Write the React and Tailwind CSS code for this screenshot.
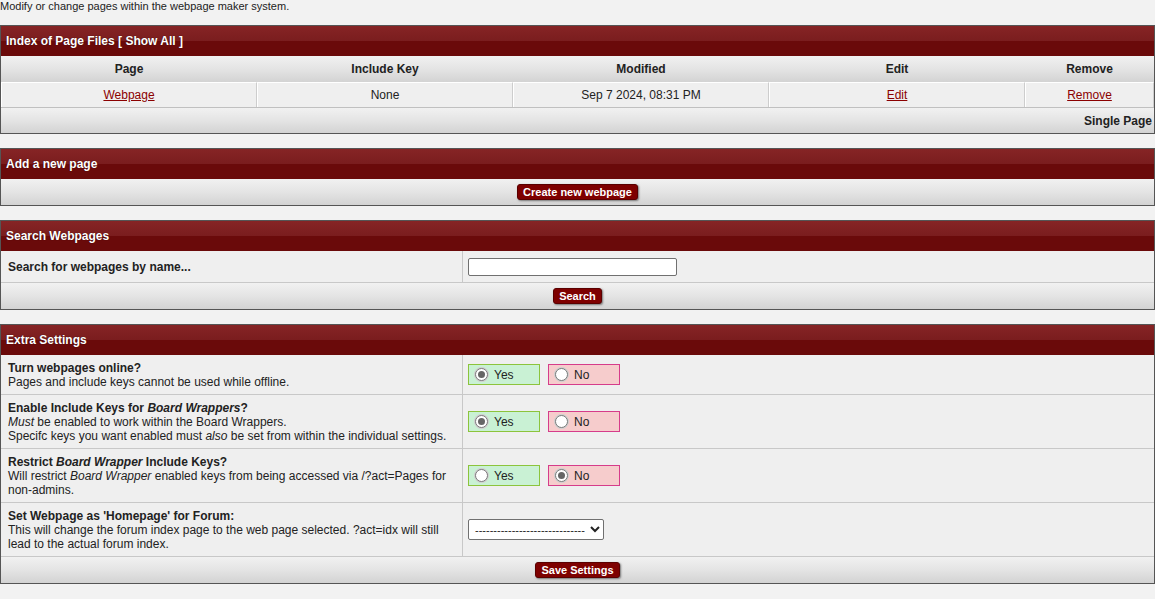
import React from 'react';

const barBg = 'bg-[linear-gradient(to_bottom,#862425_0%,#7a1d1e_50%,#6a0a0a_50%,#6a0a0a_100%)]';
const greyBg = 'bg-[linear-gradient(to_bottom,#f1f1f1_0%,#e4e4e4_50%,#d3d3d3_100%)]';

function Panel({ title, children, className = '' }) {
    return (
        <div className={`border border-[#555] bg-[#efefef] ${className}`}>
            <div className={`h-[30px] flex items-center px-[5px] ${barBg} text-white font-bold text-[12px] [text-shadow:0_0_1px_#300]`}>
                {title}
            </div>
            {children}
        </div>
    );
}

function Button({ children }) {
    return (
        <button className="h-[16px] px-[5px] rounded-[3px] bg-[#7e0000] border border-[#5a0000] text-white font-bold text-[11px] leading-[14px] shadow-[1px_1px_2px_#777]">
            {children}
        </button>
    );
}

function Radio({ checked }) {
    return (
        <span className="w-[13px] h-[13px] rounded-full border border-[#7a7a7a] bg-white flex items-center justify-center shadow-[0_0_0_1px_#cfcfcf]">
            {checked && <span className="w-[7px] h-[7px] rounded-full bg-[#666]"></span>}
        </span>
    );
}

function YesNo({ yes }) {
    return (
        <div className="flex gap-[8px]">
            <label className="w-[72px] h-[21px] flex items-center gap-[6px] pl-[6px] bg-[#c9f1d4] border border-[#8cc43c]">
                <Radio checked={yes} />
                <span>Yes</span>
            </label>
            <label className="w-[72px] h-[21px] flex items-center gap-[6px] pl-[6px] bg-[#f6cccc] border border-[#d63c8a]">
                <Radio checked={!yes} />
                <span>No</span>
            </label>
        </div>
    );
}

function SettingRow({ title, children, control }) {
    return (
        <div className="grid grid-cols-[462px_1fr] border-b border-[#c8c8c8]">
            <div className="px-[7px] pt-[6px] pb-[5px] leading-[14px] border-r border-[#c8c8c8]">
                <div className="font-bold">{title}</div>
                {children}
            </div>
            <div className="flex items-center px-[5px]">{control}</div>
        </div>
    );
}

export default function App() {
    const cols = ['Page', 'Include Key', 'Modified', 'Edit', 'Remove'];
    return (
        <div className="min-h-screen bg-[#f2f2f2] text-[#222] text-[12px] font-['Liberation_Sans',Arial,sans-serif]">
            <p className="text-[11px] leading-[13px] h-[25px]">Modify or change pages within the webpage maker system.</p>

            {/* Index of page files */}
            <Panel title={<span>Index of Page Files [ <a className="text-white">Show All</a> ]</span>}>
                <div className={`grid grid-cols-[256px_256px_256px_256px_1fr] h-[26px] items-center font-bold ${greyBg}`}>
                    {cols.map(c => (
                        <div key={c} className="text-center">{c}</div>
                    ))}
                </div>
                <div className="grid grid-cols-[256px_256px_256px_256px_1fr] h-[26px] border-b border-[#c0c0c0]">
                    <div className="flex items-center justify-center border-t border-l border-white border-r border-r-[#cdcdcd]">
                        <a className="text-[#8b0000] underline">Webpage</a>
                    </div>
                    <div className="flex items-center justify-center border-t border-l border-white border-r border-r-[#cdcdcd]">None</div>
                    <div className="flex items-center justify-center border-t border-l border-white border-r border-r-[#cdcdcd]">Sep 7 2024, 08:31 PM</div>
                    <div className="flex items-center justify-center border-t border-l border-white border-r border-r-[#cdcdcd]">
                        <a className="text-[#8b0000] underline">Edit</a>
                    </div>
                    <div className="flex items-center justify-center border-t border-l border-white border-r border-r-[#cdcdcd]">
                        <a className="text-[#8b0000] underline">Remove</a>
                    </div>
                </div>
                <div className={`h-[25px] flex items-center justify-end pr-[2px] font-bold ${greyBg}`}>Single Page</div>
            </Panel>

            {/* Add a new page */}
            <Panel title="Add a new page" className="mt-[14px]">
                <div className={`h-[26px] flex items-center justify-center ${greyBg}`}>
                    <Button>Create new webpage</Button>
                </div>
            </Panel>

            {/* Search */}
            <Panel title="Search Webpages" className="mt-[14px]">
                <div className="grid grid-cols-[462px_1fr] h-[32px] border-b border-[#c8c8c8]">
                    <div className="flex items-center px-[7px] font-bold border-r border-[#c8c8c8]">Search for webpages by name...</div>
                    <div className="flex items-center px-[5px]">
                        <input type="text" className="w-[209px] h-[18px] bg-white border border-[#707070] rounded-[2px] outline-none" />
                    </div>
                </div>
                <div className={`h-[26px] flex items-center justify-center ${greyBg}`}>
                    <Button>Search</Button>
                </div>
            </Panel>

            {/* Extra settings */}
            <Panel title="Extra Settings" className="mt-[14px]">
                <SettingRow title="Turn webpages online?" control={<YesNo yes />}>
                    <div>Pages and include keys cannot be used while offline.</div>
                </SettingRow>
                <SettingRow title={<span>Enable Include Keys for <i>Board Wrappers</i>?</span>} control={<YesNo yes />}>
                    <div><i>Must</i> be enabled to work within the Board Wrappers.</div>
                    <div>Specifc keys you want enabled must <i>also</i> be set from within the individual settings.</div>
                </SettingRow>
                <SettingRow title={<span>Restrict <i>Board Wrapper</i> Include Keys?</span>} control={<YesNo yes={false} />}>
                    <div>Will restrict <i>Board Wrapper</i> enabled keys from being accessed via /?act=Pages for non-admins.</div>
                </SettingRow>
                <SettingRow title="Set Webpage as 'Homepage' for Forum:" control={
                    <select className="w-[136px] h-[21px] bg-white border border-[#707070] rounded-[2px] text-[11px] px-[2px]">
                        <option>------------------------------</option>
                    </select>
                }>
                    <div>This will change the forum index page to the web page selected. ?act=idx will still lead to the actual forum index.</div>
                </SettingRow>
                <div className={`h-[26px] flex items-center justify-center ${greyBg}`}>
                    <Button>Save Settings</Button>
                </div>
            </Panel>
        </div>
    );
}
